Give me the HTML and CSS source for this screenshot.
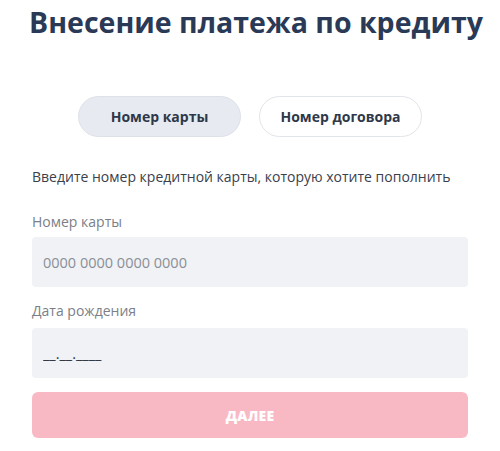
FILE: index.html
```html
<!DOCTYPE html>
<html lang="ru">
<head>
<meta charset="utf-8">
<title>Внесение платежа по кредиту</title>
<link rel="stylesheet" href="styles.css">
</head>
<body>
<main class="page">
  <h1 class="title">Внесение платежа по кредиту</h1>
  <div class="tabs">
    <button class="tab tab-active" type="button">Номер карты</button>
    <button class="tab" type="button">Номер договора</button>
  </div>
  <div class="form">
    <p class="desc">Введите номер кредитной карты, которую хотите пополнить</p>
    <label class="label label-first" for="card">Номер карты</label>
    <input class="field" id="card" type="text" placeholder="0000 0000 0000 0000">
    <label class="label label-second" for="birth">Дата рождения</label>
    <input class="field field-date" id="birth" type="text" value="__.__.____">
    <button class="submit" type="button">ДАЛЕЕ</button>
  </div>
</main>
</body>
</html>
```

FILE: styles.css
```css
* { box-sizing: border-box; }
html, body { margin: 0; padding: 0; background: #ffffff; }
body { font-family: "Open Sans", "Noto Sans", sans-serif; }
.page {
  display: flex;
  flex-direction: column;
  width: 500px;
}
.title {
  margin: 2px 0 0;
  padding-left: 12px;
  font-size: 28.5px;
  line-height: 40px;
  font-weight: 700;
  color: #2a3a56;
  text-align: center;
  white-space: nowrap;
}
.tabs {
  margin-top: 54px;
  display: flex;
  justify-content: center;
  gap: 18px;
}
.tab {
  width: 163px;
  height: 41px;
  border-radius: 21px;
  border: 1px solid #e1e4e9;
  background: #ffffff;
  font-family: inherit;
  font-size: 14px;
  font-weight: 700;
  color: #2e3849;
  padding: 0;
}
.tab-active {
  background: #e7eaf0;
  border-color: #dde1e8;
}
.form {
  display: flex;
  flex-direction: column;
  padding: 0 32px;
}
.desc {
  margin: 30px 0 0;
  font-size: 14px;
  line-height: 20px;
  color: #3a414c;
}
.label {
  font-size: 14px;
  line-height: 20px;
  color: #7b8088;
}
.label-first { margin-top: 25px; }
.label-second { margin-top: 14px; }
.field {
  margin-top: 5px;
  height: 50px;
  border: none;
  border-radius: 4px;
  background: #f0f2f5;
  padding: 0 11px;
  font-family: inherit;
  font-size: 14.5px;
  color: #2d3440;
  outline: none;
}
.field::placeholder { color: #8a8f97; }
.field-date { margin-top: 7px; }
.submit {
  margin-top: 14px;
  height: 46px;
  border: none;
  border-radius: 6px;
  background: #f8b9c5;
  color: #ffffff;
  font-family: inherit;
  font-size: 14px;
  font-weight: 800;
  letter-spacing: 0.2px;
}
```
